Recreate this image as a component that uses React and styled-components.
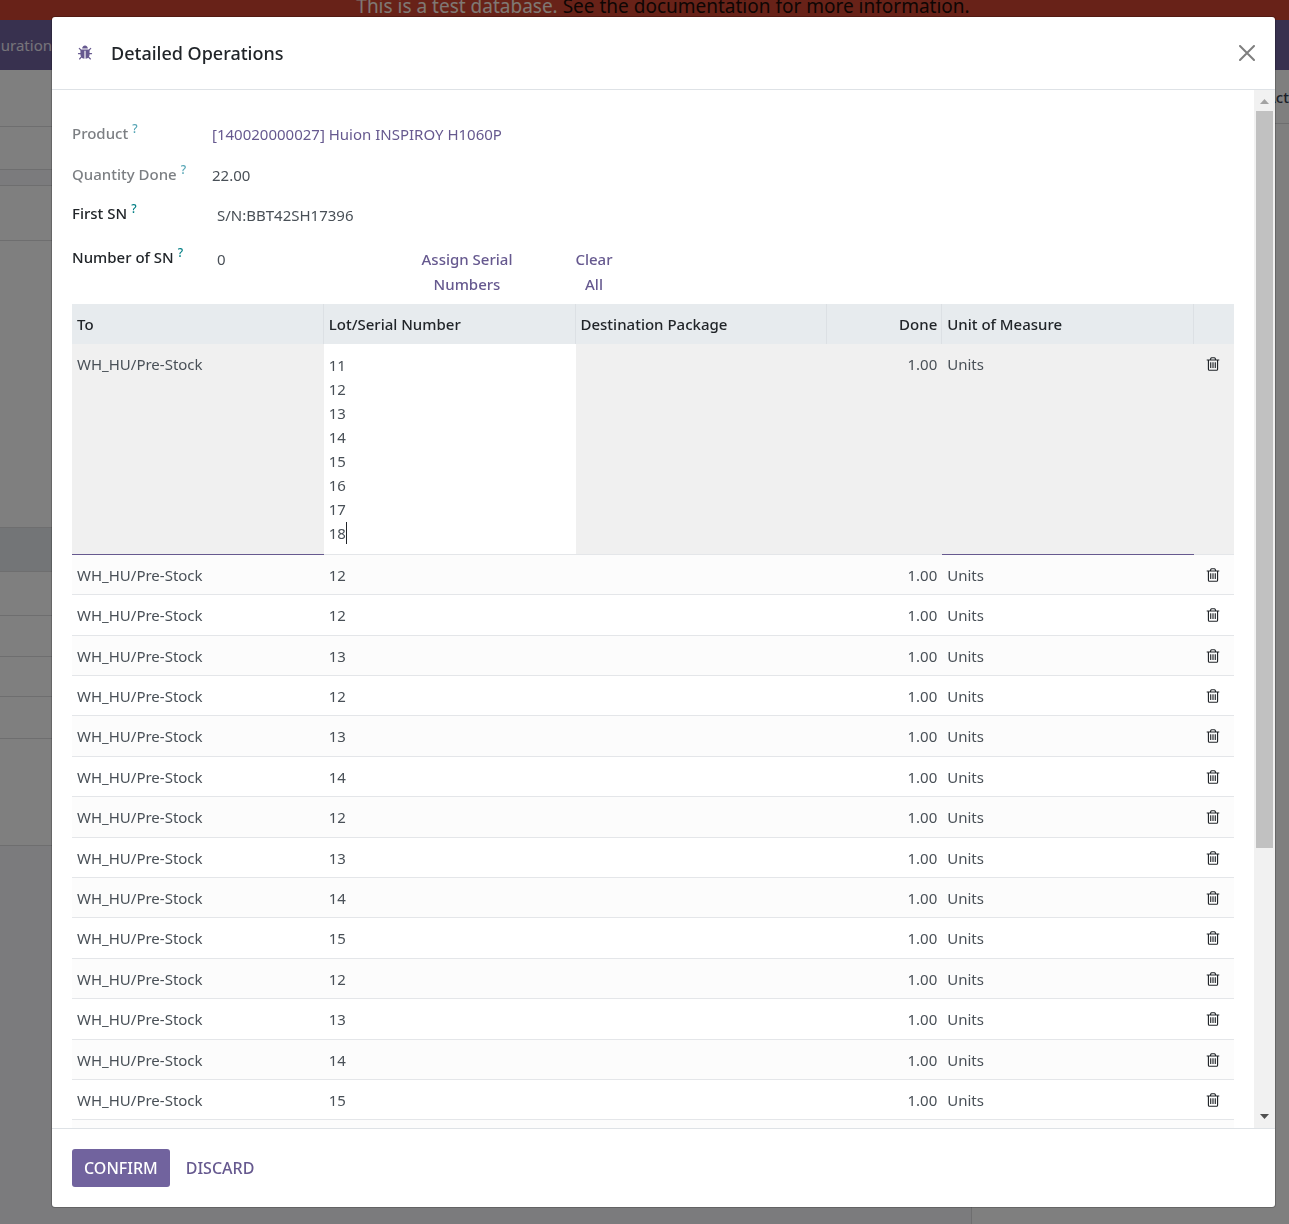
import styled, { createGlobalStyle, css } from 'styled-components';

const GlobalStyles = createGlobalStyle`
  *,
  *::before,
  *::after {
    box-sizing: border-box;
  }

  body {
    margin: 0;
    font-family: 'Noto Sans', 'Open Sans', sans-serif;
    font-size: 15px;
    line-height: 24px;
    color: #495057;
    background: #fff;
  }

  button,
  input,
  textarea {
    font: inherit;
    color: inherit;
  }

  a {
    color: inherit;
    text-decoration: none;
  }
`;

/* ---------- page behind the dialog ---------- */

const Page = styled.div`
  display: flex;
  flex-direction: column;
  height: 100vh;
  overflow: hidden;
`;

const Banner = styled.div`
  flex: none;
  height: 20px;
  padding-left: 37px;
  overflow: hidden;
  white-space: nowrap;
  text-align: center;
  font-size: 19px;
  line-height: 12px;
  color: #fff0e6;
  background: #d04430;

  a {
    color: #1c0c08;
  }
`;

const Navbar = styled.nav`
  flex: none;
  display: flex;
  align-items: center;
  height: 50px;
  background: #71639e;
`;

const NavLink = styled.a`
  display: flex;
  justify-content: flex-end;
  width: 52px;
  overflow: hidden;
  color: #ece8f4;
`;

const Main = styled.main`
  flex: 1;
  display: grid;
  grid-template-columns: 971px 1fr;
  min-height: 0;
`;

const Sheet = styled.section`
  background: #f7f7fa;
`;

const Band = styled.div`
  height: ${(props) => props.$height}px;
  border-bottom: 1px solid #dcdcde;
  background: ${(props) => props.$color || '#fff'};
`;

const Chatter = styled.aside`
  min-width: 0;
  overflow: hidden;
  border-left: 1px solid #dcdcde;
`;

const ChatterBar = styled.div`
  height: 54px;
  padding: 15px 0 0 294px;
  border-bottom: 1px solid #dcdcde;
  white-space: nowrap;
  font-weight: 500;
  color: #374151;
`;

/* ---------- dialog ---------- */

const Backdrop = styled.div`
  position: fixed;
  inset: 0;
  display: flex;
  padding: 17px 14px 17px 52px;
  background: rgba(0, 0, 0, 0.5);
`;

const Dialog = styled.div`
  flex: 1;
  display: flex;
  flex-direction: column;
  min-width: 0;
  border-radius: 3px;
  background: #fff;
  box-shadow: 0 0 0 1px rgba(0, 0, 0, 0.2);
  overflow: hidden;
`;

const Header = styled.header`
  flex: none;
  display: flex;
  align-items: center;
  gap: 18px;
  height: 73px;
  padding: 0 20px 0 25px;
  border-bottom: 1px solid #dee2e6;
`;

const Title = styled.h4`
  flex: 1;
  margin: 0;
  font-size: 18px;
  font-weight: 500;
  line-height: 28px;
  color: #212529;
`;

const IconButton = styled.button`
  display: inline-flex;
  padding: 0;
  border: none;
  background: none;
  color: ${(props) => props.$color || '#212529'};
  cursor: pointer;
`;

const Body = styled.div`
  flex: 1;
  display: flex;
  min-height: 0;
`;

const Content = styled.div`
  flex: 1;
  min-width: 0;
  padding: 23px 20px 20px;
  overflow-y: auto;
  scrollbar-width: none;
`;

const FieldRow = styled.div`
  display: grid;
  grid-template-columns: 140px 1fr;
  align-items: start;
  min-height: ${(props) => (props.$editable ? 44 : 41)}px;
`;

const AssignRow = styled(FieldRow)`
  grid-template-columns: 140px 192px 126px 32px auto 1fr;
  min-height: 65px;
`;

const Label = styled.label`
  padding-top: 8px;
  font-weight: 500;
  color: #7c7f83;

  sup {
    margin-left: 4px;
    font-size: 12px;
    line-height: 0;
    color: #55a5b5;
  }

  ${(props) =>
    props.$editable &&
    css`
      padding-top: 6px;
      color: #212529;

      sup {
        color: #017e84;
      }
    `}
`;

const Value = styled.output`
  padding-top: 9px;
`;

const ProductLink = styled.a`
  padding-top: 9px;
  color: #66598f;
`;

const TextInput = styled.input`
  width: 100%;
  min-width: 0;
  height: 24px;
  margin-top: 8px;
  padding: 0 5px;
  border: none;
  outline: none;
  background: none;
`;

const LinkButton = styled.button`
  margin-top: 8px;
  padding: 0 12px;
  border: none;
  background: none;
  font-weight: 500;
  line-height: 25px;
  color: #66598f;
  cursor: pointer;
`;

const ClearButton = styled(LinkButton)`
  grid-column: 5;
  width: 64px;
`;

const Table = styled.table`
  width: 100%;
  table-layout: fixed;
  border-spacing: 0;
`;

const Col = styled.col`
  width: ${(props) => props.$width}px;
`;

const Th = styled.th`
  height: 40px;
  padding: 0 5px;
  background: #e7ebee;
  text-align: ${(props) => (props.$right ? 'right' : 'left')};
  font-weight: 500;
  color: #212529;

  &:not(:last-child) {
    padding-right: 4px;
    border-right: 1px solid #dce0e4;
  }
`;

const Td = styled.td`
  padding: 0 5px;
  border-bottom: 1px solid #e4e6e9;
  text-align: ${(props) => (props.$right ? 'right' : 'left')};
`;

const ActionTd = styled(Td)`
  padding-right: 7px;
  line-height: 0;
  text-align: center;
`;

const Row = styled.tr`
  height: 40px;

  &:nth-child(even) {
    background: #fcfcfc;
  }

  &:nth-child(5n + 1),
  &:nth-child(5n + 3) {
    height: 41px;
  }
`;

const EditRow = styled.tr`
  height: 211px;
  background: #f0f0f0;

  ${Td} {
    padding-top: 8px;
    vertical-align: top;
  }

  ${ActionTd} {
    padding-top: 12px;
  }
`;

const UnderlinedTd = styled(Td)`
  border-bottom-color: #66598f;
`;

const LotTd = styled(Td)`
  background: #fff;
`;

const CellInput = styled.input`
  display: block;
  width: 100%;
  height: 24px;
  padding: 0;
  border: none;
  outline: none;
  background: none;
  text-align: inherit;
`;

const LotBox = styled.div`
  position: relative;
  padding-top: 1px;
`;

const LotTextarea = styled.textarea`
  display: block;
  width: 100%;
  height: 192px;
  padding: 0;
  border: none;
  outline: none;
  resize: none;
  overflow: hidden;
  background: none;
  caret-color: transparent;
`;

const Caret = styled.span`
  position: absolute;
  left: 17px;
  bottom: 1px;
  width: 1px;
  height: 22px;
  background: #212529;
`;

const Scrollbar = styled.div`
  flex: none;
  display: flex;
  flex-direction: column;
  width: 21px;
  padding: 0 2px;
  background: #f1f1f1;
`;

const Arrow = styled.svg`
  flex: none;
  width: 17px;
  height: 21px;
  fill: ${(props) => props.$color};
`;

const Track = styled.div`
  flex: 1;
`;

const Thumb = styled.div`
  height: 74%;
  background: #c1c1c1;
`;

const Footer = styled.footer`
  flex: none;
  display: flex;
  gap: 4px;
  padding: 20px;
  border-top: 1px solid #dee2e6;
`;

const Button = styled.button`
  height: 38px;
  padding: 0 12px;
  border: none;
  border-radius: 3px;
  background: ${(props) => (props.$primary ? '#71639e' : 'none')};
  font-size: 16px;
  font-weight: 500;
  text-transform: uppercase;
  color: ${(props) => (props.$primary ? '#fff' : '#66598f')};
  cursor: pointer;
`;

function BugIcon() {
  return (
    <svg width='16' height='16' viewBox='0 0 1792 1792' fill='currentColor'>
      <path d='M1696 960q0 26-19 45t-45 19h-224q0 171-67 290l208 209q19 19 19 45t-19 45q-18 19-45 19t-45-19l-198-197q-5 5-15 13t-42 28.5-65 36.5-82 29-97 13v-896h-128v896q-51 0-101.5-13.5t-87-33-66-39-43.5-32.5l-15-14-183 207q-20 21-48 21-24 0-43-16-19-18-20.5-44.5t15.5-46.5l202-227q-58-114-58-274h-224q-26 0-45-19t-19-45 19-45 45-19h224v-294l-173-173q-19-19-19-45t19-45 45-19 45 19l173 173h844l173-173q19-19 45-19t45 19 19 45-19 45l-173 173v294h224q26 0 45 19t19 45zm-480-576h-640q0-133 93.5-226.5t226.5-93.5 226.5 93.5 93.5 226.5z' />
    </svg>
  );
}

function TrashIcon() {
  return (
    <svg width='16' height='16' viewBox='0 0 1792 1792' fill='currentColor'>
      <path d='M704 736v576q0 14-9 23t-23 9h-64q-14 0-23-9t-9-23v-576q0-14 9-23t23-9h64q14 0 23 9t9 23zm256 0v576q0 14-9 23t-23 9h-64q-14 0-23-9t-9-23v-576q0-14 9-23t23-9h64q14 0 23 9t9 23zm256 0v576q0 14-9 23t-23 9h-64q-14 0-23-9t-9-23v-576q0-14 9-23t23-9h64q14 0 23 9t9 23zm128 724v-948h-896v948q0 22 7 40.5t14.5 27 10.5 8.5h832q3 0 10.5-8.5t14.5-27 7-40.5zm-672-1076h448l-48-117q-7-9-17-11h-317q-10 2-17 11zm928 32v64q0 14-9 23t-23 9h-96v948q0 83-47 143.5t-113 60.5h-832q-66 0-113-58.5t-47-141.5v-952h-96q-14 0-23-9t-9-23v-64q0-14 9-23t23-9h309l70-167q15-37 54-63t79-26h320q40 0 79 26t54 63l70 167h309q14 0 23 9t9 23z' />
    </svg>
  );
}

function CloseIcon() {
  return (
    <svg width='16' height='16' viewBox='0 0 16 16' stroke='currentColor' strokeWidth='2' strokeLinecap='round'>
      <path d='M1 1l14 14M15 1L1 15' />
    </svg>
  );
}

// height and colour of the form's sections, top to bottom
const bands = [
  [57],
  [43],
  [16, '#f7f7fa'],
  [55],
  [287],
  [44, '#e7ebee'],
  [44],
  [41],
  [40],
  [42],
  [107],
];

const lots = [12, 12, 13, 12, 13, 14, 12, 13, 14, 15, 12, 13, 14, 15, 16];

function DeleteButton() {
  return (
    <IconButton type='button' aria-label='Delete row'>
      <TrashIcon />
    </IconButton>
  );
}

function Background() {
  return (
    <Page>
      <Banner>
        This is a test database. <a href='#docs'>See the documentation for more information.</a>
      </Banner>
      <Navbar>
        <NavLink href='#configuration'>Configuration</NavLink>
      </Navbar>
      <Main>
        <Sheet>
          {bands.map(([height, color], i) => (
            <Band key={i} $height={height} $color={color} />
          ))}
        </Sheet>
        <Chatter>
          <ChatterBar>Activities</ChatterBar>
        </Chatter>
      </Main>
    </Page>
  );
}

function MoveForm() {
  return (
    <>
      <FieldRow>
        <Label as='span'>
          Product<sup>?</sup>
        </Label>
        <ProductLink href='#product'>[140020000027] Huion INSPIROY H1060P</ProductLink>
      </FieldRow>
      <FieldRow>
        <Label htmlFor='quantity'>
          Quantity Done<sup>?</sup>
        </Label>
        <Value id='quantity'>22.00</Value>
      </FieldRow>
      <FieldRow $editable>
        <Label $editable htmlFor='first-sn'>
          First SN<sup>?</sup>
        </Label>
        <TextInput id='first-sn' defaultValue='S/N:BBT42SH17396' />
      </FieldRow>
      <AssignRow $editable>
        <Label $editable htmlFor='number-sn'>
          Number of SN<sup>?</sup>
        </Label>
        <TextInput id='number-sn' defaultValue='0' />
        <LinkButton type='button'>Assign Serial Numbers</LinkButton>
        <ClearButton type='button'>Clear All</ClearButton>
      </AssignRow>
    </>
  );
}

function MoveLines() {
  return (
    <Table>
      <colgroup>
        <col />
        <col />
        <col />
        <Col $width={115} />
        <col />
        <Col $width={40} />
      </colgroup>
      <thead>
        <tr>
          <Th>To</Th>
          <Th>Lot/Serial Number</Th>
          <Th>Destination Package</Th>
          <Th $right>Done</Th>
          <Th>Unit of Measure</Th>
          <Th aria-label='Actions' />
        </tr>
      </thead>
      <tbody>
        <EditRow>
          <UnderlinedTd>
            <CellInput aria-label='To' defaultValue='WH_HU/Pre-Stock' />
          </UnderlinedTd>
          <LotTd>
            <LotBox>
              <LotTextarea
                aria-label='Lot/Serial Number'
                defaultValue={[11, 12, 13, 14, 15, 16, 17, 18].join('\n')}
              />
              <Caret />
            </LotBox>
          </LotTd>
          <Td />
          <Td $right>
            <CellInput aria-label='Done' defaultValue='1.00' />
          </Td>
          <UnderlinedTd>
            <CellInput aria-label='Unit of Measure' defaultValue='Units' />
          </UnderlinedTd>
          <ActionTd>
            <DeleteButton />
          </ActionTd>
        </EditRow>
        {lots.map((lot, i) => (
          <Row key={i}>
            <Td>WH_HU/Pre-Stock</Td>
            <Td>{lot}</Td>
            <Td />
            <Td $right>1.00</Td>
            <Td>Units</Td>
            <ActionTd>
              <DeleteButton />
            </ActionTd>
          </Row>
        ))}
      </tbody>
    </Table>
  );
}

function App() {
  return (
    <>
      <GlobalStyles />
      <Background />
      <Backdrop>
        <Dialog role='dialog' aria-labelledby='dialog-title'>
          <Header>
            <IconButton type='button' aria-label='Debug' $color='#66598f'>
              <BugIcon />
            </IconButton>
            <Title id='dialog-title'>Detailed Operations</Title>
            <IconButton type='button' aria-label='Close' $color='#7f7f7f'>
              <CloseIcon />
            </IconButton>
          </Header>
          <Body>
            <Content>
              <MoveForm />
              <MoveLines />
            </Content>
            <Scrollbar aria-hidden='true'>
              <Arrow $color='#a3a3a3' viewBox='0 0 17 21'>
                <path d='M4 14L8.500 9L13 14z' />
              </Arrow>
              <Track>
                <Thumb />
              </Track>
              <Arrow $color='#505050' viewBox='0 0 17 21'>
                <path d='M4 7L8.500 12L13 7z' />
              </Arrow>
            </Scrollbar>
          </Body>
          <Footer>
            <Button type='button' $primary>
              Confirm
            </Button>
            <Button type='button'>Discard</Button>
          </Footer>
        </Dialog>
      </Backdrop>
    </>
  );
}

export default App;
